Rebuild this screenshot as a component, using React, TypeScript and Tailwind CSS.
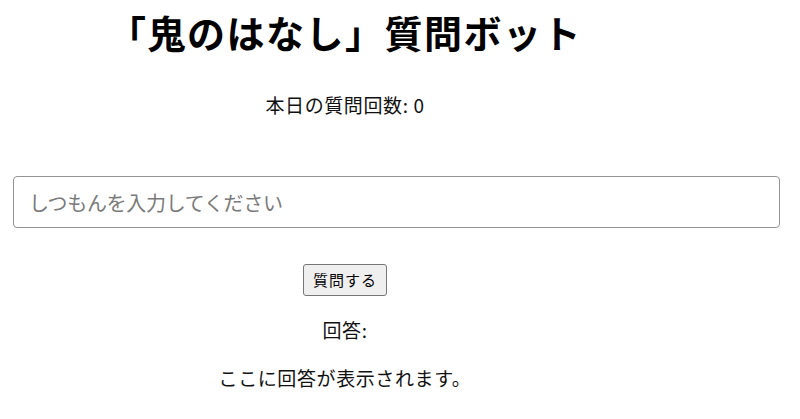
import { useState } from "react";

const App = () => {
  const [question, setQuestion] = useState("");
  const [count] = useState(0);
  const [answer] = useState("");

  return (
    <div className="min-h-screen bg-white text-black font-['Noto_Sans_CJK_JP','Noto_Sans',sans-serif] pl-[13px] pr-[20px]">
      <div className="w-[664px] text-center">
        <h1 className="text-[38px] leading-[64px] font-bold tracking-[1.5px]">「鬼のはなし」質問ボット</h1>
        <p className="mt-[27px] text-[19px] leading-[28px] tracking-[0.6px] text-[#111]">本日の質問回数:&nbsp;{count}</p>
      </div>
      <input
        value={question}
        onChange={(e) => setQuestion(e.target.value)}
        placeholder="しつもんを入力してください"
        className="mt-[57px] block w-full h-[52px] border border-[#949494] rounded-[4px] px-[15px] text-[20px] tracking-[-0.3px] text-black placeholder-[#7a7a7a] bg-white focus:outline-none"
      />
      <div className="w-[664px] flex flex-col items-center">
        <button className="mt-[36px] h-[32px] w-[84px] bg-[#efefef] border border-[#767676] rounded-[3px] text-[15px] tracking-[1px] text-black">
          質問する
        </button>
        <p className="mt-[20px] text-[19px] leading-[28px] tracking-[0.6px] text-[#111]">回答:</p>
        <p className="mt-[20px] text-[19px] leading-[28px] tracking-[0.6px] text-[#111]">
          {answer || "ここに回答が表示されます。"}
        </p>
      </div>
    </div>
  );
};

export default App;
